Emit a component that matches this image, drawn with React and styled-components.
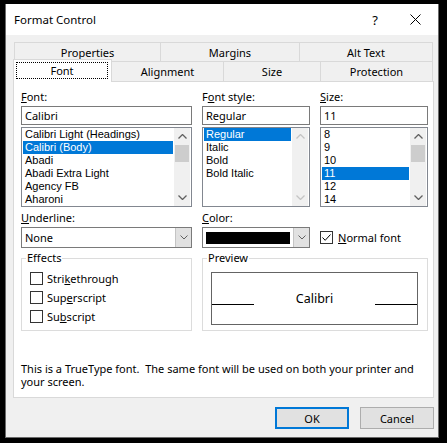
import React from "react";
import styled, { createGlobalStyle } from "styled-components";

// Format Control dialog, Font tab

const GlobalStyle = createGlobalStyle`
  html, body {
    margin: 0;
    padding: 0;
    background: #000;
  }
  body {
    font-family: "Noto Sans", "Open Sans", sans-serif;
    font-size: 11px;
    color: #000;
  }
  * { box-sizing: border-box; }
`;

const Screen = styled.div`
  width: 447px;
  height: 443px;
  background: #000;
  padding: 4px 8px 5px 5px;
`;

const Window = styled.div`
  width: 434px;
  height: 434px;
  background: #f0f0f0;
  border: 1px solid #6b6b6b;
  border-top: none;
  display: flex;
  flex-direction: column;
`;

const TitleBar = styled.div`
  height: 31px;
  background: #fff;
  display: flex;
  align-items: center;
  padding-left: 8px;
`;

const Title = styled.div`
  flex: 1;
  font-size: 11.5px;
  margin-top: -1px;
`;

const CaptionBtn = styled.div`
  width: ${(p) => p.w}px;
  height: 31px;
  display: flex;
  align-items: center;
  justify-content: center;
  font-size: 13px;
`;

const Body = styled.div`
  flex: 1;
  display: flex;
  flex-direction: column;
  padding: 7px 4px 0 7px;
`;

const TabRow = styled.div`
  display: flex;
  align-items: flex-end;
  height: ${(p) => p.h}px;
  margin-left: ${(p) => p.inset || 0}px;
`;

const Tab = styled.div`
  width: ${(p) => p.w}px;
  height: 100%;
  margin-left: -1px;
  border: 1px solid #d9d9d9;
  border-bottom: none;
  background: #f0f0f0;
  display: flex;
  align-items: center;
  justify-content: center;
  &:first-child { margin-left: 0; }
`;

const ActiveTab = styled.div`
  width: ${(p) => p.w}px;
  height: 23px;
  margin-bottom: -1px;
  position: relative;
  z-index: 2;
  background: #fff;
  border: 1px solid #d9d9d9;
  border-bottom: none;
  padding: 2px 3px 3px 2px;
  display: flex;
`;

const FocusRect = styled.div`
  flex: 1;
  border: 1px dotted #000;
  display: flex;
  align-items: center;
  justify-content: center;
`;

const Panel = styled.div`
  height: 317px;
  background: #fff;
  border: 1px solid #d9d9d9;
  padding: 7px 6px 0 7px;
  position: relative;
  z-index: 1;
`;

const Grid = styled.div`
  display: grid;
  grid-template-columns: 171px 108px 108px;
  column-gap: 10px;
  margin-top: ${(p) => p.top || 0}px;
`;

const Column = styled.div`
  display: flex;
  flex-direction: column;
  grid-column: ${(p) => p.span || "auto"};
`;

const Label = styled.div`
  height: 16px;
  line-height: 16px;
`;

const Field = styled.div`
  height: 19px;
  margin-top: 1px;
  border: 1px solid #7a7a7a;
  padding: 0 3px;
  line-height: 17px;
`;

const List = styled.div`
  height: 80px;
  margin-top: 2px;
  border: 1px solid #828790;
  padding: 0 1px;
  display: flex;
`;

const Items = styled.div`
  flex: 1;
  display: flex;
  flex-direction: column;
  font-family: "Liberation Sans", Arial, sans-serif;
  font-size: 11px;
`;

const Item = styled.div`
  height: 13px;
  line-height: 13px;
  padding-left: 2px;
  white-space: nowrap;
  overflow: hidden;
  background: ${(p) => (p.selected ? "#0078d7" : "transparent")};
  color: ${(p) => (p.selected ? "#fff" : "#000")};
`;

const ScrollBar = styled.div`
  width: 16px;
  margin-left: 1px;
  background: #f0f0f0;
  display: flex;
  flex-direction: column;
`;

const ArrowBox = styled.div`
  height: 17px;
  display: flex;
  align-items: center;
  justify-content: center;
`;

const Track = styled.div`
  flex: 1;
`;

const Thumb = styled.div`
  height: 17px;
  margin: 0 1px;
  background: #cdcdcd;
`;

const Combo = styled.div`
  height: 21px;
  margin-top: 1px;
  border: 1px solid #7a7a7a;
  display: flex;
`;

const ComboText = styled.div`
  flex: 1;
  padding-left: 3px;
  line-height: 19px;
`;

const Swatch = styled.div`
  flex: 1;
  margin: 4px 3px 3px 3px;
  background: #000;
`;

const DropBtn = styled.div`
  width: 16px;
  background: #e1e1e1;
  border-left: 1px solid #c4c4c4;
  display: flex;
  align-items: center;
  justify-content: center;
`;

const CheckRow = styled.div`
  display: flex;
  align-items: center;
  gap: ${(p) => p.gap || 4}px;
  height: 13px;
  margin-top: ${(p) => p.top || 0}px;
`;

const Box = styled.div`
  width: 13px;
  height: 13px;
  border: 1px solid #333;
  background: #fff;
  display: flex;
  align-items: center;
  justify-content: center;
  flex-shrink: 0;
`;

const Group = styled.div`
  position: relative;
  height: 73px;
  border: 1px solid #dcdcdc;
  padding: 13px 8px 0 8px;
`;

const GroupTitle = styled.div`
  position: absolute;
  top: -9px;
  left: 4px;
  padding: 0 1px;
  background: #fff;
  line-height: 16px;
`;

const EffectList = styled.div`
  display: flex;
  flex-direction: column;
  gap: 6px;
`;

const PreviewBox = styled.div`
  width: 207px;
  height: 53px;
  border: 1px solid #646464;
`;

const PreviewRow = styled.div`
  height: 32px;
  display: flex;
  align-items: flex-end;
`;

const Baseline = styled.div`
  width: 42px;
  height: 1px;
  background: #000;
`;

const Sample = styled.div`
  flex: 1;
  text-align: center;
  font-size: 12.5px;
  line-height: 16px;
  margin-bottom: -2px;
`;

const Note = styled.div`
  margin-top: 31px;
  line-height: 13px;
  width: 410px;
`;

const Footer = styled.div`
  display: flex;
  justify-content: flex-end;
  gap: 11px;
  padding: 9px 0 0 0;
`;

const Button = styled.div`
  width: 74px;
  height: 22px;
  background: #e1e1e1;
  border: ${(p) => (p.primary ? "2px solid #0078d7" : "1px solid #adadad")};
  display: flex;
  align-items: center;
  justify-content: center;
`;

const Chevron = ({ up, light }) => (
  <svg width="9" height="5" viewBox="0 0 9 5">
    <polyline
      points={up ? "0.5,4.5 4.5,0.5 8.5,4.5" : "0.5,0.5 4.5,4.5 8.5,0.5"}
      fill="none"
      stroke={light ? "#c4c4c4" : "#606060"}
      strokeWidth="1.3"
    />
  </svg>
);

const SmallChevron = () => (
  <svg width="8" height="5" viewBox="0 0 8 5">
    <polyline points="0.5,0.5 4,4 7.5,0.5" fill="none" stroke="#606060" strokeWidth="1" />
  </svg>
);

const Scroll = ({ thumb, disabled }) => (
  <ScrollBar>
    <ArrowBox>
      <Chevron up light={disabled} />
    </ArrowBox>
    <Track>{thumb && <Thumb />}</Track>
    <ArrowBox>
      <Chevron light={disabled} />
    </ArrowBox>
  </ScrollBar>
);

const fonts = ["Calibri Light (Headings)", "Calibri (Body)", "Abadi", "Abadi Extra Light", "Agency FB", "Aharoni"];
const styles = ["Regular", "Italic", "Bold", "Bold Italic"];
const sizes = ["8", "9", "10", "11", "12", "14"];

function App() {
  return (
    <Screen>
      <GlobalStyle />
      <Window>
        <TitleBar>
          <Title>Format Control</Title>
          <CaptionBtn w={36}>?</CaptionBtn>
          <CaptionBtn w={45}>
            <svg width="11" height="11" viewBox="0 0 11 11">
              <path d="M0.5 0.5 L10.5 10.5 M10.5 0.5 L0.5 10.5" stroke="#000" strokeWidth="1" />
            </svg>
          </CaptionBtn>
        </TitleBar>

        <Body>
          <TabRow h={19} inset={1}>
            <Tab w={147}>Properties</Tab>
            <Tab w={140}>Margins</Tab>
            <Tab w={134}>Alt Text</Tab>
          </TabRow>
          <TabRow h={20}>
            <ActiveTab w={99}>
              <FocusRect>Font</FocusRect>
            </ActiveTab>
            <Tab w={113}>Alignment</Tab>
            <Tab w={98}>Size</Tab>
            <Tab w={113}>Protection</Tab>
          </TabRow>

          <Panel>
            <Grid>
              <Column>
                <Label><u>F</u>ont:</Label>
                <Field>Calibri</Field>
                <List>
                  <Items>
                    {fonts.map((f, i) => (
                      <Item key={f} selected={i === 1}>{f}</Item>
                    ))}
                  </Items>
                  <Scroll thumb />
                </List>
              </Column>
              <Column>
                <Label>F<u>o</u>nt style:</Label>
                <Field>Regular</Field>
                <List>
                  <Items>
                    {styles.map((s, i) => (
                      <Item key={s} selected={i === 0}>{s}</Item>
                    ))}
                  </Items>
                  <Scroll disabled />
                </List>
              </Column>
              <Column>
                <Label><u>S</u>ize:</Label>
                <Field>11</Field>
                <List>
                  <Items>
                    {sizes.map((s) => (
                      <Item key={s} selected={s === "11"}>{s}</Item>
                    ))}
                  </Items>
                  <Scroll thumb />
                </List>
              </Column>
            </Grid>

            <Grid top={3}>
              <Column>
                <Label><u>U</u>nderline:</Label>
                <Combo>
                  <ComboText>None</ComboText>
                  <DropBtn><SmallChevron /></DropBtn>
                </Combo>
              </Column>
              <Column>
                <Label><u>C</u>olor:</Label>
                <Combo>
                  <Swatch />
                  <DropBtn><SmallChevron /></DropBtn>
                </Combo>
              </Column>
              <Column>
                <Label />
                <CheckRow top={5} gap={5}>
                  <Box>
                    <svg width="11" height="11" viewBox="0 0 11 11">
                      <polyline points="1.5,5.5 4.2,8.3 9.5,2.5" fill="none" stroke="#000" strokeWidth="1" />
                    </svg>
                  </Box>
                  <span><u>N</u>ormal font</span>
                </CheckRow>
              </Column>
            </Grid>

            <Grid top={10}>
              <Column>
                <Group>
                  <GroupTitle>Effects</GroupTitle>
                  <EffectList>
                    <CheckRow>
                      <Box />
                      <span>Stri<u>k</u>ethrough</span>
                    </CheckRow>
                    <CheckRow>
                      <Box />
                      <span>Sup<u>e</u>rscript</span>
                    </CheckRow>
                    <CheckRow>
                      <Box />
                      <span>Su<u>b</u>script</span>
                    </CheckRow>
                  </EffectList>
                </Group>
              </Column>
              <Column span="2 / 4">
                <Group>
                  <GroupTitle>Preview</GroupTitle>
                  <PreviewBox>
                    <PreviewRow>
                      <Baseline />
                      <Sample>Calibri</Sample>
                      <Baseline />
                    </PreviewRow>
                  </PreviewBox>
                </Group>
              </Column>
            </Grid>

            <Note>
              This is a TrueType font.&nbsp; The same font will be used on both your printer and your screen.
            </Note>
          </Panel>

          <Footer>
            <Button primary>OK</Button>
            <Button>Cancel</Button>
          </Footer>
        </Body>
      </Window>
    </Screen>
  );
}

export default App;
